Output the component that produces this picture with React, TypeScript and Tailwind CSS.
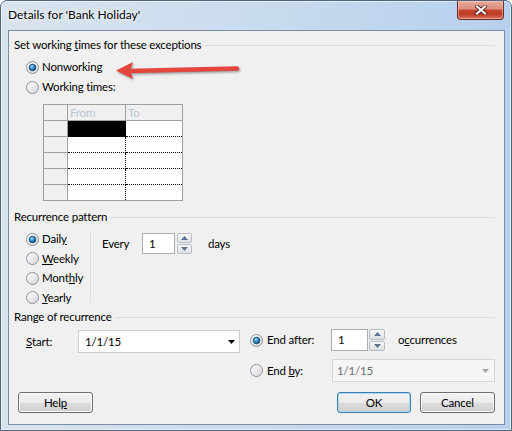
import React from "react";

// Win7 style radio button
function Radio({ checked }: { checked?: boolean }) {
  return (
    <svg width="13" height="13" viewBox="0 0 13 13" className="shrink-0">
      <defs>
        <linearGradient id="radioFace" x1="0" y1="0" x2="1" y2="1">
          <stop offset="0" stopColor="#ffffff" />
          <stop offset="1" stopColor="#d2d5d9" />
        </linearGradient>
        <radialGradient id="radioDot" cx="0.4" cy="0.35" r="0.7">
          <stop offset="0" stopColor="#b4e4fc" />
          <stop offset="0.45" stopColor="#2f8fd6" />
          <stop offset="1" stopColor="#0c4675" />
        </radialGradient>
      </defs>
      <circle cx="6.5" cy="6.5" r="6" fill="url(#radioFace)" stroke="#8d9095" />
      {checked && (
        <circle cx="6.5" cy="6.5" r="3.3" fill="url(#radioDot)" stroke="#163f63" strokeWidth="0.8" />
      )}
    </svg>
  );
}

function RadioRow({
  checked,
  label,
  h,
}: {
  checked?: boolean;
  label: React.ReactNode;
  h: string;
}) {
  return (
    <div className={`flex items-center gap-[3px] ${h}`}>
      <Radio checked={checked} />
      <span className="whitespace-nowrap">{label}</span>
    </div>
  );
}

function GroupHeader({ title }: { title: React.ReactNode }) {
  return (
    <div className="flex items-center h-[16px]">
      <span className="whitespace-nowrap">{title}</span>
      <div className="flex-1 h-px bg-[#d5dfe5] ml-[4px]" />
    </div>
  );
}

function SpinBtn({ up }: { up?: boolean }) {
  return (
    <div className="flex-1 flex items-center justify-center border border-[#b6bdc7] rounded-[2px] bg-[linear-gradient(#f8f8f8,#dcdfe3)]">
      <svg width="7" height="4" viewBox="0 0 7 4">
        <path d={up ? "M0 4 L3.5 0 L7 4Z" : "M0 0 L7 0 L3.5 4Z"} fill="#5a7393" />
      </svg>
    </div>
  );
}

function Spinner({ w, h }: { w: string; h: string }) {
  return (
    <div className={`flex flex-col gap-px ${w} ${h}`}>
      <SpinBtn up />
      <SpinBtn />
    </div>
  );
}

function Button({ children, isDefault, w }: { children: React.ReactNode; isDefault?: boolean; w: string }) {
  return (
    <div
      className={`h-[21px] ${w} flex items-center justify-center rounded-[3px] border bg-[linear-gradient(#f2f2f2_0%,#ebebeb_50%,#dddddd_50%,#cfcfcf_100%)] ${
        isDefault
          ? "border-[#3c7fb1] shadow-[inset_0_0_0_1px_#a6daf3]"
          : "border-[#707070] shadow-[inset_0_0_0_1px_#fafafa]"
      }`}
    >
      {children}
    </div>
  );
}

function TimesTable() {
  const rows = [0, 1, 2, 3, 4];
  return (
    <div className="ml-[29px] mt-[7px] w-[140px] border border-[#a0a0a0] bg-white">
      <div className="flex h-[16px] border-b border-[#a0a0a0] bg-[#f0f0f0] text-[#bac5d4] leading-[15px]">
        <div className="w-[24px] border-r border-[#a0a0a0]" />
        <div className="w-[58px] border-r border-[#a0a0a0] pl-[2px]">From</div>
        <div className="flex-1 pl-[2px]">To</div>
      </div>
      {rows.map((i) => {
        const last = i === rows.length - 1;
        return (
          <div key={i} className={`flex ${last ? "h-[15px]" : "h-[16px]"}`}>
            <div className={`w-[24px] bg-[#f0f0f0] border-r border-[#a0a0a0] ${last ? "" : "border-b"}`} />
            <div
              className={`w-[58px] border-r border-dotted border-black ${last ? "" : "border-b"} ${
                i === 0 ? "bg-black" : ""
              }`}
            />
            <div className={`flex-1 border-dotted border-black ${last ? "" : "border-b"}`} />
          </div>
        );
      })}
    </div>
  );
}

export default function App() {
  return (
    <div className="relative w-[512px] h-[431px] overflow-hidden rounded-t-[7px] border border-[#50667f] bg-[linear-gradient(90deg,#d9e3ee_0%,#cbdcee_45%,#b6d0ed_100%)] shadow-[inset_0_0_0_1px_rgba(255,255,255,0.55)] font-['Lato',sans-serif] text-[12px] text-black">
      {/* Title bar */}
      <div className="flex h-[29px]">
        <span className="self-center pl-[7px] pb-[1px] [text-shadow:0_0_6px_#fff,0_0_3px_#fff]">
          Details for 'Bank Holiday'
        </span>
        <div className="ml-auto mr-[7px] w-[47px] h-[19px] flex items-center justify-center rounded-b-[4px] border border-t-0 border-[#6e2a20] bg-[linear-gradient(#eaa999_0%,#dc8e7d_45%,#c4442f_50%,#bd3c28_75%,#d97a63_100%)] shadow-[inset_0_0_0_1px_rgba(255,220,210,0.45)]">
          <svg width="12" height="10" viewBox="0 0 12 10">
            <path d="M2 1.5 L10 8.5 M10 1.5 L2 8.5" stroke="#4d2119" strokeWidth="3.8" strokeLinecap="square" />
            <path d="M2 1.5 L10 8.5 M10 1.5 L2 8.5" stroke="#ffffff" strokeWidth="2.1" strokeLinecap="square" />
          </svg>
        </div>
      </div>

      {/* Client area */}
      <div className="ml-[7px] w-[497px] h-[395px] border border-[#7a8da3] bg-[#f0f0f0] text-[11.5px] tracking-[-0.2px]">
        <div className="flex flex-col pt-[6px] pl-[5px] pr-[9px]">
          <GroupHeader
            title={
              <>
                Set working <u>t</u>imes for these exceptions
              </>
            }
          />
          <div className="mt-[4px] pl-[12px]">
            <RadioRow checked label="Nonworking" h="h-[20px]" />
            <RadioRow label="Working times:" h="h-[20px]" />
          </div>

          <TimesTable />

          <div className="mt-[8px]">
            <GroupHeader title="Recurrence pattern" />
          </div>
          <div className="mt-[4px] flex">
            <div className="w-[76px] pl-[12px] flex flex-col">
              <RadioRow
                checked
                h="h-[20px]"
                label={
                  <>
                    Dail<u>y</u>
                  </>
                }
              />
              <RadioRow
                h="h-[19px]"
                label={
                  <>
                    <u>W</u>eekly
                  </>
                }
              />
              <RadioRow
                h="h-[20px]"
                label={
                  <>
                    Mont<u>h</u>ly
                  </>
                }
              />
              <RadioRow
                h="h-[19px]"
                label={
                  <>
                    <u>Y</u>early
                  </>
                }
              />
            </div>
            <div className="w-px h-[71px] mt-[3px] bg-[#d5dfe5]" />
            <div className="pl-[11px] pt-[4px]">
              <div className="flex items-center h-[21px]">
                <span className="w-[40px]">Every</span>
                <div className="w-[33px] h-[21px] border border-[#abadb3] bg-white flex items-center pl-[6px]">1</div>
                <div className="ml-[2px]">
                  <Spinner w="w-[15px]" h="h-[21px]" />
                </div>
                <span className="ml-[16px]">days</span>
              </div>
            </div>
          </div>

          <div className="mt-[2px]">
            <GroupHeader title="Range of recurrence" />
          </div>
          <div className="pt-[4px] flex">
            <div className="w-[236px] pl-[12px] pt-[1px] flex items-start">
              <span className="w-[52px] h-[23px] flex items-center">
                <u>S</u>tart:
              </span>
              <div className="w-[162px] h-[23px] border border-[#c7ccd2] bg-white flex items-center pl-[6px]">
                <span className="flex-1">1/1/15</span>
                <svg width="7" height="4" viewBox="0 0 7 4" className="mr-[4px]">
                  <path d="M0 0 L7 0 L3.5 4Z" fill="#000" />
                </svg>
              </div>
            </div>
            <div className="flex flex-col">
              <div className="flex items-center h-[22px]">
                <Radio checked />
                <span className="ml-[4px] w-[64px]">End after:</span>
                <div className="w-[37px] h-[22px] border border-[#abadb3] bg-white flex items-center pl-[6px]">1</div>
                <div className="ml-[1px]">
                  <Spinner w="w-[16px]" h="h-[22px]" />
                </div>
                <span className="ml-[13px]">
                  o<u>c</u>currences
                </span>
              </div>
              <div className="flex items-center h-[23px] mt-[8px]">
                <Radio />
                <span className="ml-[4px] w-[65px]">
                  End <u>b</u>y:
                </span>
                <div className="w-[163px] h-[23px] border border-[#d3d7dc] bg-[#f5f5f5] flex items-center pl-[4px] text-[#6d6d6d]">
                  <span className="flex-1">1/1/15</span>
                  <svg width="7" height="4" viewBox="0 0 7 4" className="mr-[5px]">
                    <path d="M0 0 L7 0 L3.5 4Z" fill="#a3a3a3" />
                  </svg>
                </div>
              </div>
            </div>
          </div>

          <div className="mt-[10px] flex items-center pl-[4px]">
            <Button w="w-[75px]">
              <span>
                Hel<u>p</u>
              </span>
            </Button>
            <div className="ml-auto">
              <Button isDefault w="w-[74px]">
                OK
              </Button>
            </div>
            <div className="ml-[9px]">
              <Button w="w-[75px]">Cancel</Button>
            </div>
          </div>
        </div>
      </div>

      {/* Red annotation arrow */}
      <svg
        width="134"
        height="26"
        viewBox="0 0 134 26"
        className="absolute left-[110px] top-[56px] pointer-events-none"
      >
        <defs>
          <filter id="arrowShadow" x="-10%" y="-50%" width="120%" height="200%">
            <feGaussianBlur stdDeviation="1.2" />
          </filter>
        </defs>
        <g transform="translate(1 1.5)" opacity="0.35" filter="url(#arrowShadow)">
          <path d="M5 13.5 L22 5 L19 13.5 L22 22 Z" fill="#000" />
          <path d="M18 14 L126 11.5" stroke="#000" strokeWidth="4.5" strokeLinecap="round" />
        </g>
        <path d="M5 13.5 L22 5 L19 13.5 L22 22 Z" fill="#e2463d" />
        <path d="M18 14 L126 11.5" stroke="#e2463d" strokeWidth="4.5" strokeLinecap="round" />
      </svg>
    </div>
  );
}
